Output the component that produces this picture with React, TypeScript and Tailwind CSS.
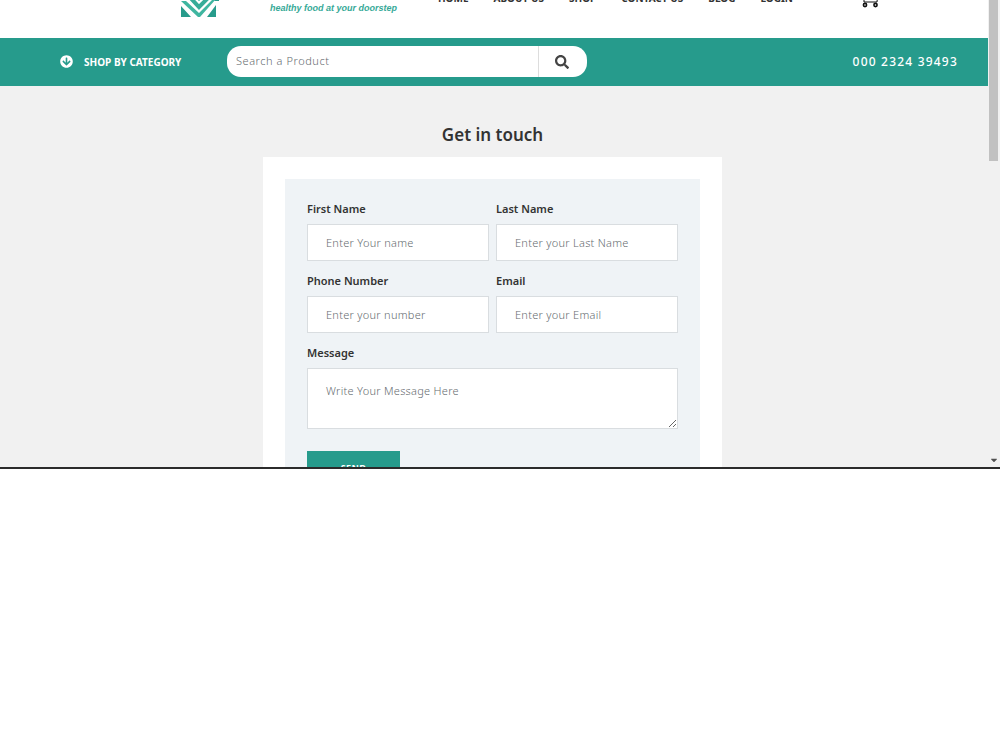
import { FaArrowCircleDown, FaCaretDown, FaSearch } from 'react-icons/fa'

interface Field {
  id: string
  label: string
  placeholder: string
  type: string
}

const navLinks = ['HOME', 'ABOUT US', 'SHOP', 'CONTACT US', 'BLOG', 'LOGIN']

const fields: Field[] = [
  { id: 'firstName', label: 'First Name', placeholder: 'Enter Your name', type: 'text' },
  { id: 'lastName', label: 'Last Name', placeholder: 'Enter your Last Name', type: 'text' },
  { id: 'phone', label: 'Phone Number', placeholder: 'Enter your number', type: 'tel' },
  { id: 'email', label: 'Email', placeholder: 'Enter your Email', type: 'email' },
]

const Logo = () => (
  <svg width="40" height="38" viewBox="0 0 40 38" aria-hidden="true">
    <path d="M1 22h5l13 12 14-14h3L20 38h-2z" fill="#3fb6a0" />
    <path d="M5 13l14 15 15-15" fill="none" stroke="#36ac98" strokeWidth="4" />
    <path d="M14 14l5 6 5-6" fill="none" stroke="#45bda6" strokeWidth="3" />
    <path d="M1 27l10 11H1zM27 38l9-12v12z" fill="#279b8b" />
    <path d="M34 22l5-4v4z" fill="#279b8b" />
  </svg>
)

const CartIcon = () => (
  <svg width="20" height="20" viewBox="0 0 20 20" fill="none" stroke="#111" aria-hidden="true">
    <path d="M0 1h3v13h13l1-10H4" />
    <circle cx="4" cy="17" r="1.600" strokeWidth="1.600" />
    <circle cx="14.500" cy="17" r="1.600" strokeWidth="1.600" />
  </svg>
)

const Header = () => (
  <header className="flex h-[38px] flex-col justify-end overflow-hidden bg-white">
    <div className="flex h-20 shrink-0 items-center pr-[107px] pl-[180px]">
      <a href="#" aria-label="Home" className="flex items-center gap-[50px]">
        <Logo />
        <span className="pt-5 font-['Liberation_Sans',sans-serif] text-[9px] leading-3 font-bold text-[#36a997] italic">
          healthy food at your doorstep
        </span>
      </a>
      <nav className="ml-auto flex gap-[25px] text-[10px] leading-4 font-bold">
        {navLinks.map((link) => (
          <a key={link} href="#">{link}</a>
        ))}
      </nav>
      <button type="button" aria-label="Cart" className="ml-[68px]">
        <CartIcon />
      </button>
    </div>
  </header>
)

const SearchBar = () => (
  <div className="flex h-12 items-center bg-[#269b8c] pr-[30px] pb-px pl-[60px] text-white">
    <button type="button" className="flex w-[167px] items-center gap-[11px] text-[10px] leading-4 font-bold">
      <FaArrowCircleDown className="size-[13px]" />
      SHOP BY CATEGORY
    </button>
    <form className="flex h-[31px] w-[360px] overflow-hidden rounded-[14px] bg-white">
      <input
        type="search"
        aria-label="Search a Product"
        placeholder="Search a Product"
        className="min-w-0 flex-1 px-[9px] text-[11px] font-light tracking-wider text-[#333] outline-none placeholder:text-[#666c70]"
      />
      <button
        type="submit"
        aria-label="Search"
        className="flex w-[49px] items-center justify-center border-l border-[#ddd] pr-[3px] text-[#444]"
      >
        <FaSearch className="size-[14px]" />
      </button>
    </form>
    <a href="tel:000232439493" className="ml-auto text-xs font-medium tracking-widest">
      000 2324 39493
    </a>
  </div>
)

const ContactForm = () => (
  <main className="pt-9 pr-[3px]">
    <h1 className="text-center text-[17px] leading-[26px] font-semibold">Get in touch</h1>
    <div className="mx-auto mt-[9px] max-w-[459px] bg-white p-[22px]">
      <form className="bg-[#eff3f6] p-[22px]">
        <div className="grid grid-cols-2 gap-x-[7px] gap-y-3">
          {fields.map((field) => (
            <div key={field.id}>
              <label htmlFor={field.id} className="block text-[11px] leading-4 font-semibold">
                {field.label}
              </label>
              <input
                id={field.id}
                type={field.type}
                placeholder={field.placeholder}
                className="mt-[7px] block h-[37px] w-full border border-[#d9dde0] bg-white px-[18px] text-[11px] font-light tracking-wide outline-none placeholder:text-[#666c70]"
              />
            </div>
          ))}
          <div className="col-span-2">
            <label htmlFor="message" className="block text-[11px] leading-4 font-semibold">
              Message
            </label>
            <textarea
              id="message"
              placeholder="Write Your Message Here"
              className="mt-[7px] block h-[61px] w-full resize border border-[#d9dde0] bg-white px-[18px] py-3.5 text-[11px] leading-4 font-light tracking-wide outline-none placeholder:text-[#666c70]"
            />
          </div>
        </div>
        <button
          type="submit"
          className="mt-[22px] h-[34px] w-[93px] bg-[#269b8c] text-[9px] font-bold tracking-wider text-white"
        >
          SEND
        </button>
      </form>
    </div>
  </main>
)

// Drawn scrollbar at the right edge of the viewport
const Scrollbar = () => (
  <div className="flex w-3 shrink-0 flex-col items-center justify-between bg-[#f1f1f1] pr-px">
    <div className="h-[161px] w-[9px] bg-[#c1c1c1]" />
    <FaCaretDown className="mb-0.5 size-2.5 text-[#505050]" />
  </div>
)

export default function App() {
  return (
    <div className="min-h-screen bg-white font-['Noto_Sans','Open_Sans',sans-serif] text-[#333]">
      <div className="flex h-[469px] overflow-hidden border-b-2 border-[#2b2b2b] bg-[#f1f1f1]">
        <div className="min-w-0 flex-1">
          <Header />
          <SearchBar />
          <ContactForm />
        </div>
        <Scrollbar />
      </div>
    </div>
  )
}
